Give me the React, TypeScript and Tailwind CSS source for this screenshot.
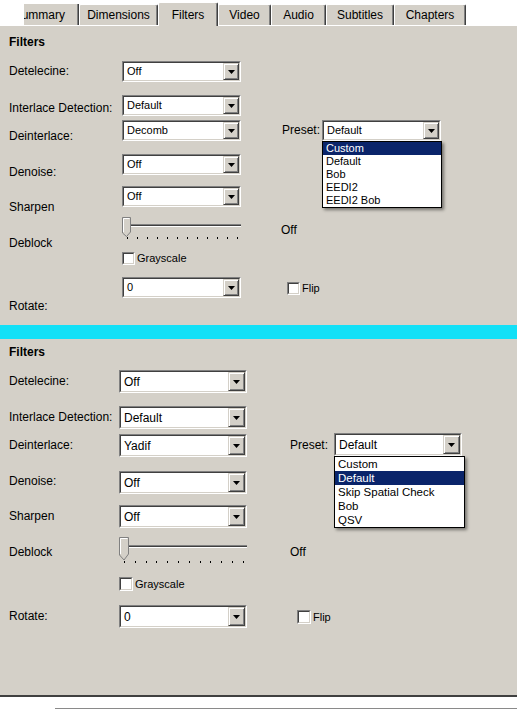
import React from "react";

type Size = "sm" | "lg";

const Arrow = ({ size }: { size: Size }) => (
  <div
    className={`flex shrink-0 items-center justify-center border border-t-[#d4d0c8] border-l-[#d4d0c8] border-b-[#404040] border-r-[#404040] bg-[#d4d0c8] shadow-[inset_1px_1px_0_#fff,inset_-1px_-1px_0_#808080] ${
      size === "sm" ? "w-[16px]" : "w-[17px]"
    }`}
  >
    <svg width="7" height="4" viewBox="0 0 7 4">
      <path d="M0 0h7L3.5 4z" fill="#000" />
    </svg>
  </div>
);

const Combo = ({ value, size }: { value: string; size: Size }) => (
  <div
    className={`flex shrink-0 border border-t-[#808080] border-l-[#808080] border-b-white border-r-white ${
      size === "sm" ? "h-[21px] w-[119px] text-[11px]" : "h-[23px] w-[128px] text-[12px]"
    }`}
  >
    <div className="flex min-w-0 flex-1 border border-t-[#404040] border-l-[#404040] border-b-[#d4d0c8] border-r-[#d4d0c8] bg-white">
      <span className="flex flex-1 items-center pl-[3px] leading-none">{value}</span>
      <Arrow size={size} />
    </div>
  </div>
);

const List = ({ items, selected, size }: { items: string[]; selected: string; size: Size }) => (
  <div
    className={`absolute left-0 top-full z-10 border border-black bg-white shadow-[2px_2px_3px_rgba(0,0,0,0.45)] ${
      size === "sm" ? "w-[120px] text-[11px]" : "w-[131px] text-[11.5px]"
    }`}
  >
    {items.map((it) => (
      <div
        key={it}
        className={`pl-[3px] ${size === "sm" ? "h-[13px] leading-[13px]" : "h-[14px] leading-[14px]"} ${
          it === selected ? "bg-[#0a246a] text-white" : "text-black"
        }`}
      >
        {it}
      </div>
    ))}
  </div>
);

const Check = ({ size }: { size: Size }) => (
  <div
    className={`shrink-0 border border-t-[#808080] border-l-[#808080] border-b-white border-r-white ${
      size === "sm" ? "h-[13px] w-[13px]" : "h-[14px] w-[14px]"
    }`}
  >
    <div className="h-full w-full border border-t-[#404040] border-l-[#404040] border-b-[#d4d0c8] border-r-[#d4d0c8] bg-white" />
  </div>
);

const Slider = ({ size }: { size: Size }) => {
  const sm = size === "sm";
  const w = sm ? 119 : 128;
  const h = sm ? 23 : 27;
  const tw = sm ? 9 : 10;
  const body = sm ? 15 : 17;
  const tip = sm ? 19.5 : 23;
  const gy = sm ? 8 : 9;
  const step = sm ? 10 : 10.8;
  const ty = sm ? 20 : 24;
  const cx = tw / 2;
  return (
    <svg width={w} height={h} className="shrink-0">
      <line x1={tw} y1={gy - 0.5} x2={w} y2={gy - 0.5} stroke="#808080" />
      <line x1={tw} y1={gy + 0.5} x2={w} y2={gy + 0.5} stroke="#404040" />
      <line x1={tw} y1={gy + 1.5} x2={w} y2={gy + 1.5} stroke="#ffffff" />
      <polygon
        points={`0.5,0.5 ${tw - 0.5},0.5 ${tw - 0.5},${body} ${cx},${tip} 0.5,${body + 1}`}
        fill="#d4d0c8"
        stroke="#808080"
      />
      <polyline points={`1.5,${body} 1.5,1.5 ${tw - 1.5},1.5`} fill="none" stroke="#ffffff" />
      {Array.from({ length: 12 }).map((_, i) => (
        <rect key={i} x={Math.round(5 + step * i)} y={ty} width="1" height="2" fill="#000" />
      ))}
    </svg>
  );
};

const tabs = [
  { label: "Dimensions", w: "w-[79px]" },
  { label: "Filters", w: "w-[60px]", active: true },
  { label: "Video", w: "w-[53px]" },
  { label: "Audio", w: "w-[55px]" },
  { label: "Subtitles", w: "w-[68px]" },
  { label: "Chapters", w: "w-[72px]" },
];

const Tabs = () => (
  <div className="flex h-[26px] items-end bg-white pl-[24px] text-[12px]">
    <div className="mb-[1px] flex h-[21px] w-[55px] items-center justify-end overflow-hidden border-r border-r-[#404040] bg-[#d4d0c8] pr-[13px] shadow-[inset_-1px_0_0_#808080]">
      <span className="shrink-0">Summary</span>
    </div>
    {tabs.map((t) =>
      t.active ? (
        <div
          key={t.label}
          className={`flex h-[24px] items-center justify-center rounded-t-[2px] border-l border-t border-l-white border-t-white border-r border-r-[#404040] bg-[#d4d0c8] shadow-[inset_-1px_0_0_#808080] ${t.w}`}
        >
          {t.label}
        </div>
      ) : (
        <div
          key={t.label}
          className={`mb-[1px] flex h-[21px] items-center justify-center rounded-t-[2px] border-l border-t border-l-white border-t-white border-r border-r-[#404040] bg-[#d4d0c8] shadow-[inset_-1px_0_0_#808080] ${t.w}`}
        >
          {t.label}
        </div>
      )
    )}
  </div>
);

const TopPanel = () => (
  <section className="h-[299px] bg-[#d4d0c8] pl-[9px] pt-[8px] text-[12px]">
    <h2 className="font-bold leading-[16px]">Filters</h2>
    <div className="mt-[11px]">
      <div className="flex h-[34px]">
        <div className="w-[113px] pt-[3px] leading-[14px]">Detelecine:</div>
        <Combo value="Off" size="sm" />
      </div>
      <div className="flex h-[25px]">
        <div className="w-[113px] pt-[6px] leading-[14px]">Interlace Detection:</div>
        <Combo value="Default" size="sm" />
      </div>
      <div className="flex h-[34px]">
        <div className="w-[113px] pt-[9px] leading-[14px]">Deinterlace:</div>
        <Combo value="Decomb" size="sm" />
        <div className="ml-[41px] w-[40px] pt-[3px] leading-[14px]">Preset:</div>
        <div className="relative h-fit">
          <Combo value="Default" size="sm" />
          <List items={["Custom", "Default", "Bob", "EEDI2", "EEDI2 Bob"]} selected="Custom" size="sm" />
        </div>
      </div>
      <div className="flex h-[32px]">
        <div className="w-[113px] pt-[11px] leading-[14px]">Denoise:</div>
        <Combo value="Off" size="sm" />
      </div>
      <div className="flex h-[31px]">
        <div className="w-[113px] pt-[14px] leading-[14px]">Sharpen</div>
        <Combo value="Off" size="sm" />
      </div>
      <div className="flex h-[35px]">
        <div className="w-[113px] pt-[19px] leading-[14px]">Deblock</div>
        <Slider size="sm" />
        <div className="ml-[40px] pt-[6px] leading-[14px]">Off</div>
      </div>
      <div className="flex h-[25px]">
        <div className="ml-[113px] flex h-fit items-center gap-[2px] text-[11px] leading-[13px]">
          <Check size="sm" />
          <span>Grayscale</span>
        </div>
      </div>
      <div className="flex">
        <div className="w-[113px] pt-[22px] leading-[14px]">Rotate:</div>
        <Combo value="0" size="sm" />
        <div className="ml-[46px] mt-[5px] flex h-fit items-center gap-[2px] text-[11px] leading-[13px]">
          <Check size="sm" />
          <span>Flip</span>
        </div>
      </div>
    </div>
  </section>
);

const BottomPanel = () => (
  <section className="h-[358px] border-b-2 border-b-[#404040] bg-[#d4d0c8] pl-[9px] pt-[5px] text-[12px]">
    <h2 className="font-bold leading-[16px]">Filters</h2>
    <div className="mt-[10px]">
      <div className="flex h-[36px]">
        <div className="w-[110px] pt-[4px] leading-[14px]">Detelecine:</div>
        <Combo value="Off" size="lg" />
      </div>
      <div className="flex h-[28px]">
        <div className="w-[110px] pt-[4px] leading-[14px]">Interlace Detection:</div>
        <Combo value="Default" size="lg" />
      </div>
      <div className="flex h-[37px]">
        <div className="w-[110px] pt-[4px] leading-[14px]">Deinterlace:</div>
        <Combo value="Yadif" size="lg" />
        <div className="ml-[43px] w-[44px] pt-[4px] leading-[14px]">Preset:</div>
        <div className="relative -mt-[1px] h-fit">
          <Combo value="Default" size="lg" />
          <List
            items={["Custom", "Default", "Skip Spatial Check", "Bob", "QSV"]}
            selected="Default"
            size="lg"
          />
        </div>
      </div>
      <div className="flex h-[34px]">
        <div className="w-[110px] pt-[3px] leading-[14px]">Denoise:</div>
        <Combo value="Off" size="lg" />
      </div>
      <div className="flex h-[32px]">
        <div className="w-[110px] pt-[4px] leading-[14px]">Sharpen</div>
        <Combo value="Off" size="lg" />
      </div>
      <div className="flex h-[40px]">
        <div className="w-[110px] pt-[8px] leading-[14px]">Deblock</div>
        <Slider size="lg" />
        <div className="ml-[43px] pt-[8px] leading-[14px]">Off</div>
      </div>
      <div className="flex h-[28px]">
        <div className="ml-[110px] flex h-fit items-center gap-[2px] text-[11px] leading-[14px]">
          <Check size="lg" />
          <span>Grayscale</span>
        </div>
      </div>
      <div className="flex">
        <div className="w-[110px] pt-[4px] leading-[14px]">Rotate:</div>
        <Combo value="0" size="lg" />
        <div className="ml-[50px] mt-[5px] flex h-fit items-center gap-[2px] text-[11px] leading-[14px]">
          <Check size="lg" />
          <span>Flip</span>
        </div>
      </div>
    </div>
  </section>
);

export default function App() {
  return (
    <div className="h-[710px] w-[517px] overflow-hidden bg-white font-['Liberation_Sans',Arial,sans-serif] text-black">
      <Tabs />
      <TopPanel />
      <div className="h-[14px] bg-[#12e0f7]" />
      <BottomPanel />
      <div className="ml-[55px] mt-[11px] h-px bg-[#8a8a8a]" />
    </div>
  );
}
